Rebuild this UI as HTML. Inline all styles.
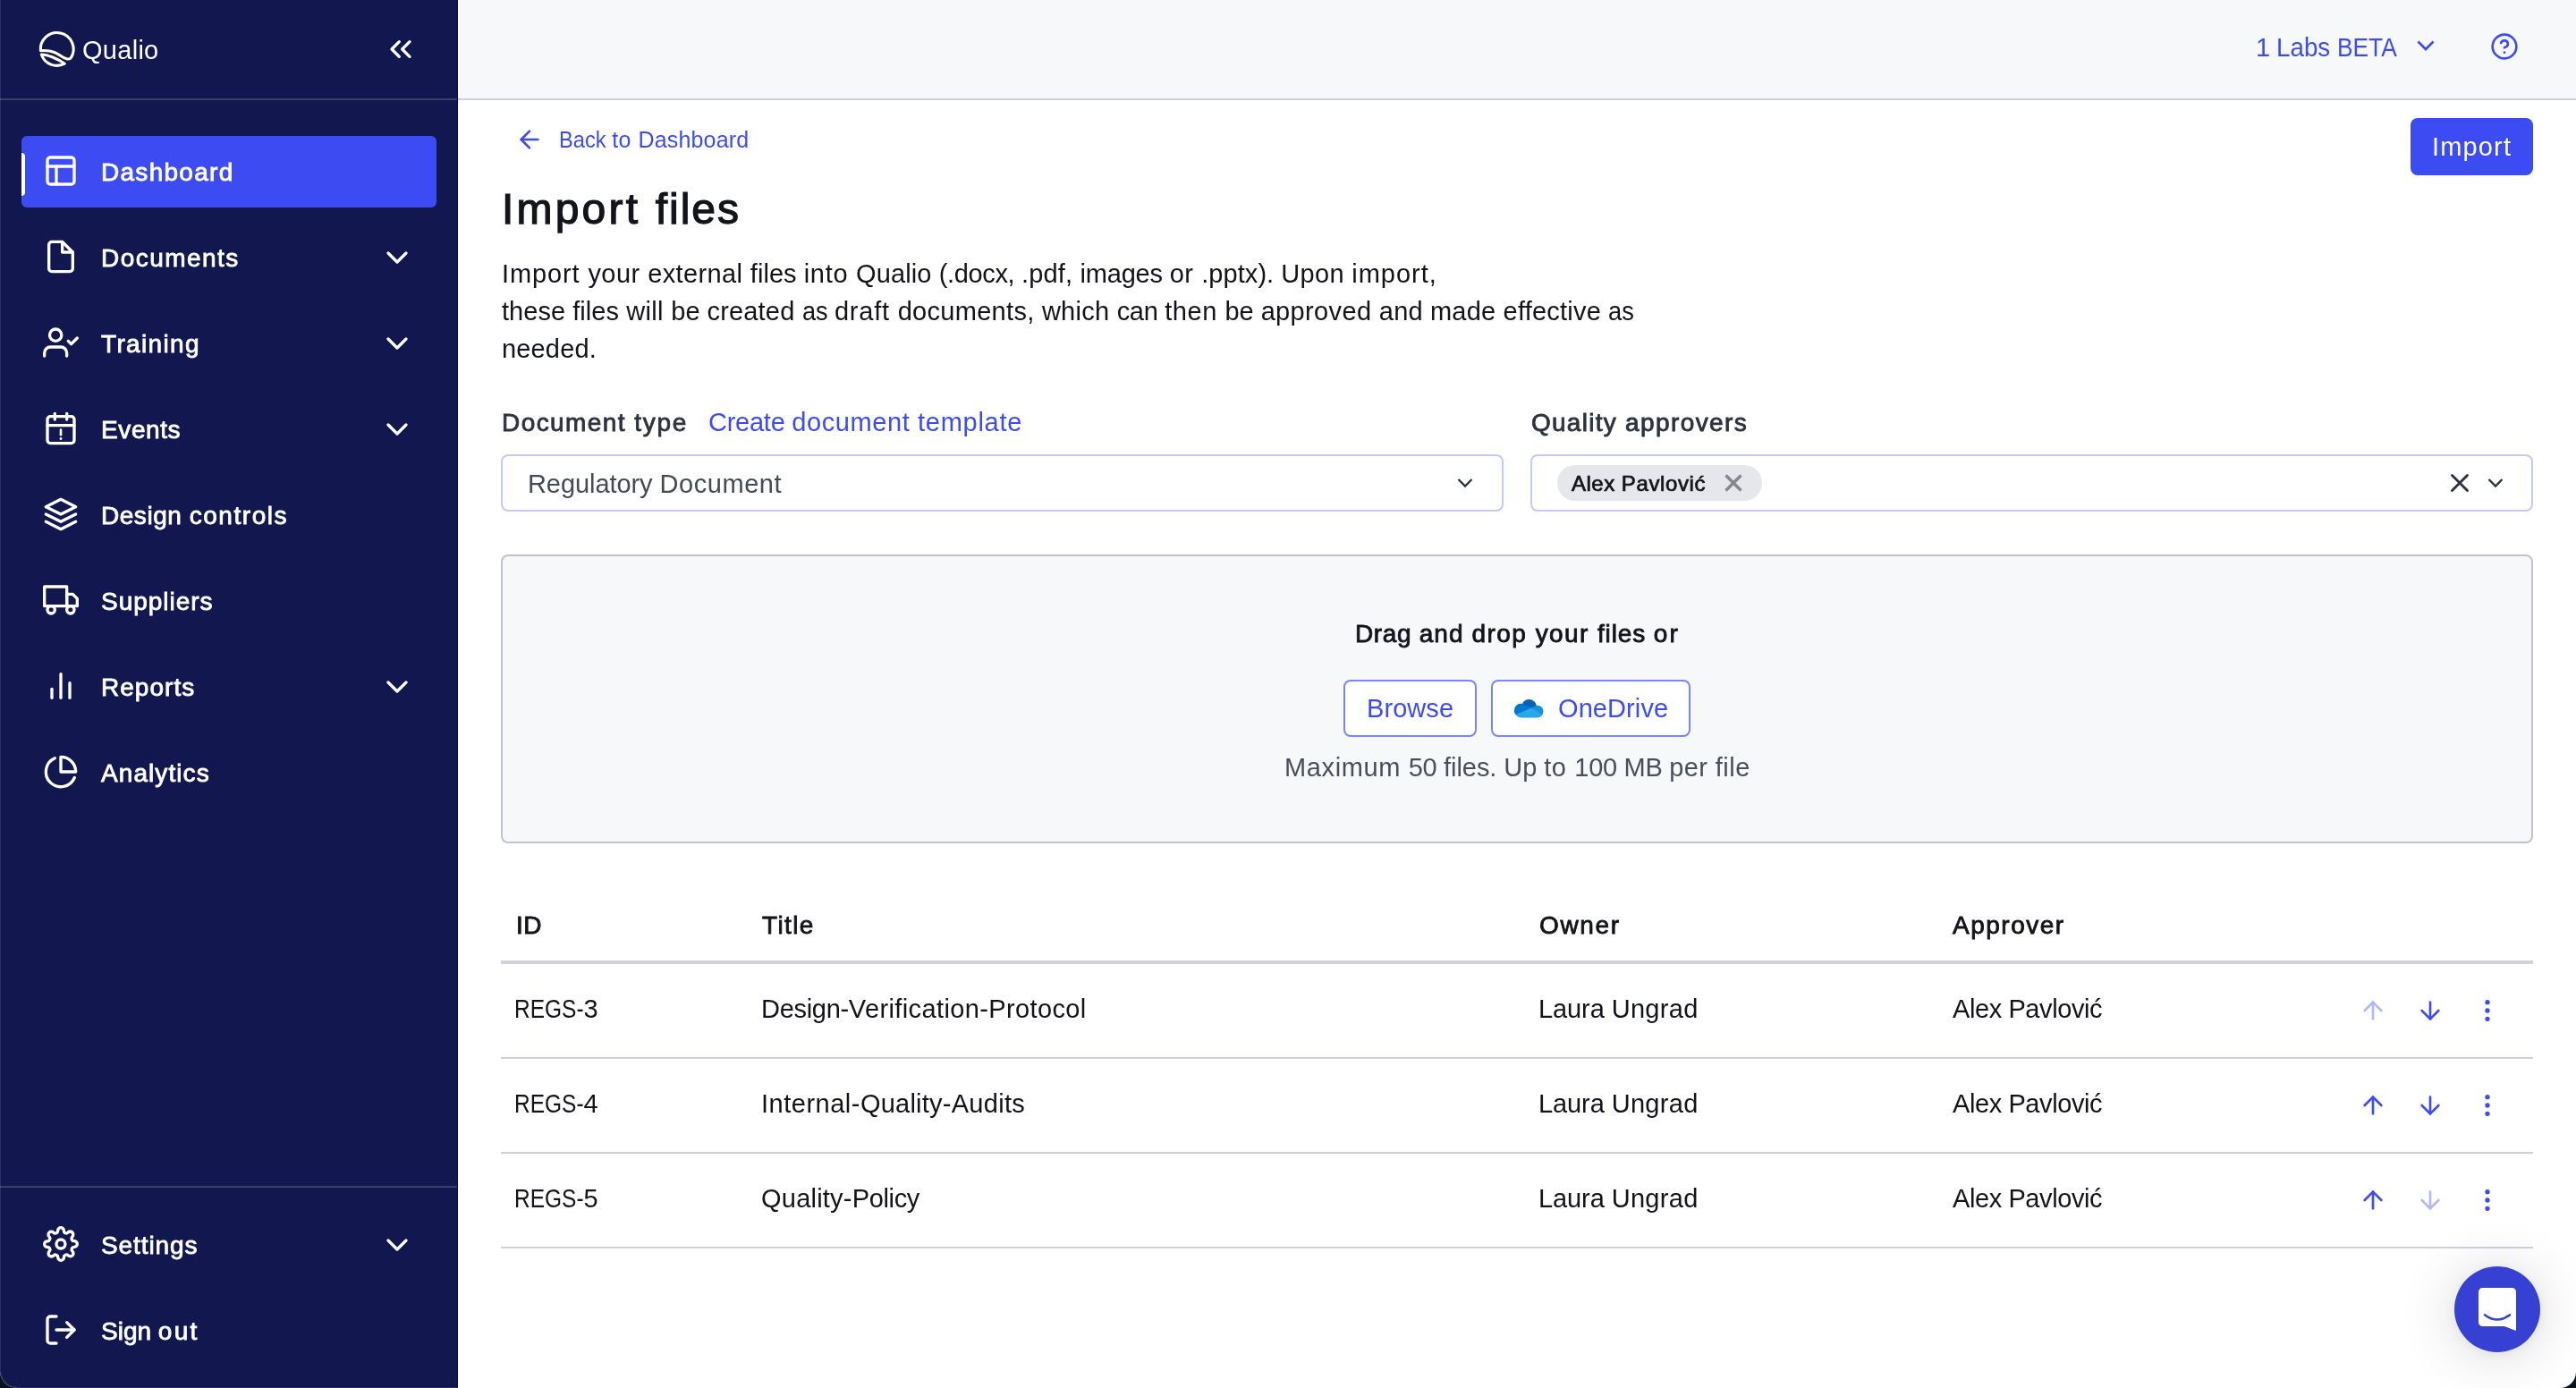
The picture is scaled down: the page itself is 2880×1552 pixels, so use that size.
<!DOCTYPE html>
<html lang="en"><head><meta charset="utf-8"><meta name="viewport" content="width=2880"><title>Import files - Qualio</title>
<style>
html,body{margin:0;padding:0;background:#06141F;}
body{width:2880px;height:1552px;overflow:hidden;position:relative;font-family:"Liberation Sans", sans-serif;}
#app{position:absolute;left:0;top:0;width:2880px;height:1552px;background:#fff;overflow:hidden;border-radius:0 0 18px 19px;}
.b{position:absolute;}
.t{position:absolute;white-space:pre;line-height:1;will-change:transform;font-family:"Liberation Sans", sans-serif;}
.sx{display:inline-block;transform-origin:0 50%;white-space:pre;}
.i{position:absolute;fill:none;stroke-linecap:round;stroke-linejoin:round;overflow:visible;}
</style></head>
<body>
<div id="app">
<div class="b" style="left:0;top:0;width:512px;height:1552px;background:#12174F"></div>
<div class="b" style="left:511px;top:0;width:1px;height:1552px;background:#070C49"></div>
<div class="b" style="left:0;top:110px;width:511px;height:2px;background:#3A3E6C"></div>
<div class="b" style="left:0;top:1326px;width:511px;height:2px;background:#3A3E6C"></div>
<svg class="i" style="left:44px;top:35px" width="40" height="40" viewBox="0 0 40 40" stroke="#fff" stroke-width="3.1"><path d="M1.4 21.6A18.4 18.4 0 1 1 35.6 29.2C34.6 31 32.5 31.2 30.5 30.8C26 29.8 23 26.5 19.2 24.6C14 22 8 21.2 1.4 21.6Z"/><path d="M2.3 26C8 25.5 20 30.5 28.3 36.2A18.4 18.4 0 0 1 2.3 26Z"/></svg>
<svg class="i" style="left:428.0px;top:35.0px" width="40" height="40" viewBox="0 0 24 24" stroke="#fff" stroke-width="2" ><polyline points="11 17 6 12 11 7"/><polyline points="18 17 13 12 18 7"/></svg>
<div class="b" style="left:24px;top:152px;width:464px;height:80px;background:#3D4CF2;border-radius:6px"></div>
<div class="b" style="left:24px;top:171px;width:4px;height:48px;background:#fff;border-radius:0 4px 4px 0"></div>
<svg class="i" style="left:48.0px;top:171.0px" width="40" height="40" viewBox="0 0 24 24" stroke="#fff" stroke-width="2" ><rect x="3" y="3" width="18" height="18" rx="2" ry="2"/><line x1="3" y1="9" x2="21" y2="9"/><line x1="9" y1="21" x2="9" y2="9"/></svg>
<svg class="i" style="left:48.0px;top:267.0px" width="40" height="40" viewBox="0 0 24 24" stroke="#fff" stroke-width="2" ><path d="M13 2H6a2 2 0 0 0-2 2v16a2 2 0 0 0 2 2h12a2 2 0 0 0 2-2V9z"/><polyline points="13 2 13 9 20 9"/></svg>
<svg class="i" style="left:424.0px;top:268.0px" width="40" height="40" viewBox="0 0 24 24" stroke="#fff" stroke-width="2" ><polyline points="6 9 12 15 18 9"/></svg>
<svg class="i" style="left:48.0px;top:363.0px" width="40" height="40" viewBox="0 0 24 24" stroke="#fff" stroke-width="2" ><path d="M16 21v-2a4 4 0 0 0-4-4H5a4 4 0 0 0-4 4v2"/><circle cx="8.5" cy="7" r="4"/><polyline points="17 11 19 13 23 9"/></svg>
<svg class="i" style="left:424.0px;top:364.0px" width="40" height="40" viewBox="0 0 24 24" stroke="#fff" stroke-width="2" ><polyline points="6 9 12 15 18 9"/></svg>
<svg class="i" style="left:48.0px;top:459.0px" width="40" height="40" viewBox="0 0 24 24" stroke="#fff" stroke-width="2" ><rect x="3" y="4" width="18" height="18" rx="2" ry="2"/><line x1="16" y1="2" x2="16" y2="6"/><line x1="8" y1="2" x2="8" y2="6"/><line x1="3" y1="10" x2="21" y2="10"/><line x1="12" y1="13" x2="12" y2="16.3" stroke-width="1.6"/><line x1="12" y1="18.9" x2="12" y2="19" stroke-width="1.7"/></svg>
<svg class="i" style="left:424.0px;top:460.0px" width="40" height="40" viewBox="0 0 24 24" stroke="#fff" stroke-width="2" ><polyline points="6 9 12 15 18 9"/></svg>
<svg class="i" style="left:48.0px;top:555.0px" width="40" height="40" viewBox="0 0 24 24" stroke="#fff" stroke-width="2" ><polygon points="12 2 2 7 12 12 22 7 12 2"/><polyline points="2 17 12 22 22 17"/><polyline points="2 12 12 17 22 12"/></svg>
<svg class="i" style="left:48.0px;top:651.0px" width="40" height="40" viewBox="0 0 24 24" stroke="#fff" stroke-width="2" ><rect x="1" y="3" width="15" height="13"/><polygon points="16 8 20 8 23 11 23 16 16 16 16 8"/><circle cx="5.5" cy="18.5" r="2.5"/><circle cx="18.5" cy="18.5" r="2.5"/></svg>
<svg class="i" style="left:48.0px;top:747.0px" width="40" height="40" viewBox="0 0 24 24" stroke="#fff" stroke-width="2" ><line x1="18" y1="20" x2="18" y2="10"/><line x1="12" y1="20" x2="12" y2="4"/><line x1="6" y1="20" x2="6" y2="14"/></svg>
<svg class="i" style="left:424.0px;top:748.0px" width="40" height="40" viewBox="0 0 24 24" stroke="#fff" stroke-width="2" ><polyline points="6 9 12 15 18 9"/></svg>
<svg class="i" style="left:48.0px;top:843.0px" width="40" height="40" viewBox="0 0 24 24" stroke="#fff" stroke-width="2" ><path d="M21.21 15.89A10 10 0 1 1 8 2.83"/><path d="M22 12A10 10 0 0 0 12 2v10z"/></svg>
<svg class="i" style="left:48.0px;top:1371.0px" width="40" height="40" viewBox="0 0 24 24" stroke="#fff" stroke-width="2" ><circle cx="12" cy="12" r="3"/><path d="M19.4 15a1.65 1.65 0 0 0 .33 1.82l.06.06a2 2 0 0 1 0 2.83 2 2 0 0 1-2.83 0l-.06-.06a1.65 1.65 0 0 0-1.82-.33 1.65 1.65 0 0 0-1 1.51V21a2 2 0 0 1-2 2 2 2 0 0 1-2-2v-.09A1.65 1.65 0 0 0 9 19.4a1.65 1.65 0 0 0-1.82.33l-.06.06a2 2 0 0 1-2.83 0 2 2 0 0 1 0-2.83l.06-.06a1.65 1.65 0 0 0 .33-1.82 1.65 1.65 0 0 0-1.51-1H3a2 2 0 0 1-2-2 2 2 0 0 1 2-2h.09A1.65 1.65 0 0 0 4.6 9a1.65 1.65 0 0 0-.33-1.82l-.06-.06a2 2 0 0 1 0-2.83 2 2 0 0 1 2.83 0l.06.06a1.65 1.65 0 0 0 1.82.33H9a1.65 1.65 0 0 0 1-1.51V3a2 2 0 0 1 2-2 2 2 0 0 1 2 2v.09a1.65 1.65 0 0 0 1 1.51 1.65 1.65 0 0 0 1.82-.33l.06-.06a2 2 0 0 1 2.83 0 2 2 0 0 1 0 2.83l-.06.06a1.65 1.65 0 0 0-.33 1.82V9a1.65 1.65 0 0 0 1.51 1H21a2 2 0 0 1 2 2 2 2 0 0 1-2 2h-.09a1.65 1.65 0 0 0-1.51 1z"/></svg>
<svg class="i" style="left:424.0px;top:1372.0px" width="40" height="40" viewBox="0 0 24 24" stroke="#fff" stroke-width="2" ><polyline points="6 9 12 15 18 9"/></svg>
<svg class="i" style="left:48.0px;top:1467.0px" width="40" height="40" viewBox="0 0 24 24" stroke="#fff" stroke-width="2" ><path d="M9 21H5a2 2 0 0 1-2-2V5a2 2 0 0 1 2-2h4"/><polyline points="16 17 21 12 16 7"/><line x1="21" y1="12" x2="9" y2="12"/></svg>
<div class="b" style="left:512px;top:0;width:2368px;height:110px;background:#fff"></div>
<div class="b" style="left:513px;top:0;width:2367px;height:110px;background:#F7F8FA"></div>
<div class="b" style="left:512px;top:110px;width:2368px;height:2px;background:#D0D1DB"></div>
<svg class="i" style="left:2696.0px;top:35.2px;stroke-linecap:butt;stroke-linejoin:miter" width="32" height="32" viewBox="0 0 24 24" stroke="#3D4CF2" stroke-width="2" ><polyline points="5.6 8.6 12 15 18.4 8.6"/></svg>
<svg class="i" style="left:2784.0px;top:36.0px" width="32" height="32" viewBox="0 0 24 24" stroke="#3D4CF2" stroke-width="2" ><circle cx="12" cy="12" r="10"/><path d="M9.09 9a3 3 0 0 1 5.83 1c0 2-3 3-3 3"/><line x1="12" y1="17" x2="12.01" y2="17"/></svg>
<svg class="i" style="left:576.0px;top:140.0px" width="32" height="32" viewBox="0 0 24 24" stroke="#3D4CF2" stroke-width="2" ><line x1="19" y1="12" x2="5" y2="12"/><polyline points="12 19 5 12 12 5"/></svg>
<div class="b" style="left:2695px;top:132px;width:137px;height:64px;background:#3D4CF2;border-radius:8px"></div>
<div class="b" style="left:560px;top:508px;width:1121px;height:64px;background:#fff;border:2px solid #C4C9FC;border-radius:8px;box-sizing:border-box"></div>
<div class="b" style="left:1711px;top:508px;width:1121px;height:64px;background:#fff;border:2px solid #C4C9FC;border-radius:8px;box-sizing:border-box"></div>
<svg class="i" style="left:1624.0px;top:525.8px;stroke-linecap:butt;stroke-linejoin:miter" width="28" height="28" viewBox="0 0 24 24" stroke="#2E3140" stroke-width="2" ><polyline points="5.6 8.6 12 15 18.4 8.6"/></svg>
<div class="b" style="left:1741px;top:520px;width:229px;height:40px;background:#E5E7EB;border-radius:20px"></div>
<svg class="i" style="left:1921.0px;top:523.0px;stroke-linecap:butt;stroke-linejoin:miter" width="34" height="34" viewBox="0 0 24 24" stroke="#85878C" stroke-width="2.4" ><line x1="18" y1="6" x2="6" y2="18"/><line x1="6" y1="6" x2="18" y2="18"/></svg>
<svg class="i" style="left:2733.0px;top:523.0px" width="34" height="34" viewBox="0 0 24 24" stroke="#2E3140" stroke-width="2.0" ><line x1="18" y1="6" x2="6" y2="18"/><line x1="6" y1="6" x2="18" y2="18"/></svg>
<svg class="i" style="left:2776.0px;top:525.8px;stroke-linecap:butt;stroke-linejoin:miter" width="28" height="28" viewBox="0 0 24 24" stroke="#2E3140" stroke-width="2" ><polyline points="5.6 8.6 12 15 18.4 8.6"/></svg>
<div class="b" style="left:560px;top:620px;width:2272px;height:323px;background:#F7F8FA;border:2px solid #C0C2CE;border-radius:8px;box-sizing:border-box"></div>
<div class="b" style="left:1502px;top:760px;width:149px;height:64px;background:#fff;border:2px solid #7A85FD;border-radius:8px;box-sizing:border-box"></div>
<div class="b" style="left:1667px;top:760px;width:223px;height:64px;background:#fff;border:2px solid #7A85FD;border-radius:8px;box-sizing:border-box"></div>
<svg class="i" style="left:1693px;top:782px" width="32.4" height="20.3" viewBox="0 0 32.4 20.3" stroke="none"><defs><clipPath id="cl"><circle cx="7.6" cy="12.4" r="7.6"/><circle cx="16.6" cy="8.4" r="8.4"/><circle cx="25.6" cy="13.6" r="6.7"/><rect x="7" y="12" width="19" height="8.3"/></clipPath></defs><g clip-path="url(#cl)"><rect width="33" height="21" fill="#0364B8"/><polygon points="-2,-2 8.2,4.7 19.4,9.3 2.1,16.8 -2,22" fill="#0078D4"/><polygon points="19.4,9.3 27,5.9 40,4 40,22 31.5,16.8" fill="#1490DF"/><polygon points="19.4,9.3 34,18.3 34,24 -2,24 -2,18.6" fill="#28A8EA"/></g></svg>
<div class="b" style="left:560px;top:1074px;width:2272px;height:4px;background:#D0D1DB"></div>
<div class="b" style="left:560px;top:1182px;width:2272px;height:2px;background:#D0D1DB"></div>
<svg class="i" style="left:2637.0px;top:1114.0px" width="32" height="32" viewBox="0 0 24 24" stroke="#B1B7FA" stroke-width="2" ><line x1="12" y1="19" x2="12" y2="5"/><polyline points="5 12 12 5 19 12"/></svg>
<svg class="i" style="left:2701.0px;top:1114.0px" width="32" height="32" viewBox="0 0 24 24" stroke="#3D4CF2" stroke-width="2" ><line x1="12" y1="5" x2="12" y2="19"/><polyline points="19 12 12 19 5 12"/></svg>
<svg class="i" style="left:2765.0px;top:1114.0px" width="32" height="32" viewBox="0 0 24 24" stroke="#3D4CF2" stroke-width="2" ><circle cx="12" cy="12" r="1"/><circle cx="12" cy="5" r="1"/><circle cx="12" cy="19" r="1"/></svg>
<div class="b" style="left:560px;top:1288px;width:2272px;height:2px;background:#D0D1DB"></div>
<svg class="i" style="left:2637.0px;top:1220.0px" width="32" height="32" viewBox="0 0 24 24" stroke="#3D4CF2" stroke-width="2" ><line x1="12" y1="19" x2="12" y2="5"/><polyline points="5 12 12 5 19 12"/></svg>
<svg class="i" style="left:2701.0px;top:1220.0px" width="32" height="32" viewBox="0 0 24 24" stroke="#3D4CF2" stroke-width="2" ><line x1="12" y1="5" x2="12" y2="19"/><polyline points="19 12 12 19 5 12"/></svg>
<svg class="i" style="left:2765.0px;top:1220.0px" width="32" height="32" viewBox="0 0 24 24" stroke="#3D4CF2" stroke-width="2" ><circle cx="12" cy="12" r="1"/><circle cx="12" cy="5" r="1"/><circle cx="12" cy="19" r="1"/></svg>
<div class="b" style="left:560px;top:1394px;width:2272px;height:2px;background:#D0D1DB"></div>
<svg class="i" style="left:2637.0px;top:1326.0px" width="32" height="32" viewBox="0 0 24 24" stroke="#3D4CF2" stroke-width="2" ><line x1="12" y1="19" x2="12" y2="5"/><polyline points="5 12 12 5 19 12"/></svg>
<svg class="i" style="left:2701.0px;top:1326.0px" width="32" height="32" viewBox="0 0 24 24" stroke="#B1B7FA" stroke-width="2" ><line x1="12" y1="5" x2="12" y2="19"/><polyline points="19 12 12 19 5 12"/></svg>
<svg class="i" style="left:2765.0px;top:1326.0px" width="32" height="32" viewBox="0 0 24 24" stroke="#3D4CF2" stroke-width="2" ><circle cx="12" cy="12" r="1"/><circle cx="12" cy="5" r="1"/><circle cx="12" cy="19" r="1"/></svg>
<div class="b" style="left:2744px;top:1416px;width:96px;height:96px;border-radius:50%;background:#3640D3;box-shadow:0 2px 12px rgba(0,0,0,.06),0 4px 64px rgba(0,0,0,.16)"></div>
<svg class="i" style="left:2768px;top:1438px" width="48" height="52" viewBox="0 0 48 52" stroke="none"><path d="M7.5 2H40.5A4.5 4.5 0 0 1 45 6.5V50L32 45H7.5A4.5 4.5 0 0 1 3 40.5V6.5A4.5 4.5 0 0 1 7.5 2Z" fill="#fff"/><path d="M10 32.2Q24 42.8 38 32.2" fill="none" stroke="#3640D3" stroke-width="2.5" stroke-linecap="round"/></svg>
<div class="t" style="left:92px;top:42px;font-size:29px;color:#fff;letter-spacing:0.28px;">Qualio</div>
<div class="t" style="left:112.5px;top:179px;font-size:28px;color:#fff;-webkit-text-stroke:0.84px #fff;letter-spacing:1.28px;">Dashboard</div>
<div class="t" style="left:112.5px;top:275px;font-size:28px;color:#fff;-webkit-text-stroke:0.84px #fff;letter-spacing:1.45px;">Documents</div>
<div class="t" style="left:112.5px;top:371px;font-size:28px;color:#fff;-webkit-text-stroke:0.84px #fff;letter-spacing:1.34px;">Training</div>
<div class="t" style="left:112.5px;top:467px;font-size:28px;color:#fff;-webkit-text-stroke:0.84px #fff;letter-spacing:0.6px;">Events</div>
<div class="t" style="left:112.5px;top:563px;font-size:28px;color:#fff;-webkit-text-stroke:0.84px #fff;"><span style="letter-spacing:0.53px">Design </span><span style="letter-spacing:1.55px">controls</span></div>
<div class="t" style="left:112.5px;top:659px;font-size:28px;color:#fff;-webkit-text-stroke:0.84px #fff;letter-spacing:0.98px;">Suppliers</div>
<div class="t" style="left:112.5px;top:755px;font-size:28px;color:#fff;-webkit-text-stroke:0.84px #fff;letter-spacing:1.04px;">Reports</div>
<div class="t" style="left:112.5px;top:851px;font-size:28px;color:#fff;-webkit-text-stroke:0.84px #fff;letter-spacing:1.08px;">Analytics</div>
<div class="t" style="left:112.5px;top:1379px;font-size:28px;color:#fff;-webkit-text-stroke:0.84px #fff;letter-spacing:0.91px;">Settings</div>
<div class="t" style="left:112.5px;top:1475px;font-size:28px;color:#fff;-webkit-text-stroke:0.84px #fff;"><span style="letter-spacing:-0.01px">Sign </span><span style="letter-spacing:2.34px">out</span></div>
<div class="t" style="left:2521.5px;top:39px;font-size:29px;color:#3D4CF2;"><span style="letter-spacing:-0.45px">1 </span><span class="sx" style="width:67.92px;transform:scaleX(0.9573)">Labs </span><span class="sx" style="width:66.78px;transform:scaleX(0.9074)">BETA</span></div>
<div class="t" style="left:624.5px;top:144px;font-size:25px;color:#3D4CF2;"><span class="sx" style="width:59.19px;transform:scaleX(0.9465)">Back </span><span style="letter-spacing:0.48px">to </span><span style="letter-spacing:0.17px">Dashboard</span></div>
<div class="t" style="left:2719px;top:150px;font-size:29px;color:#fff;letter-spacing:1.16px;">Import</div>
<div class="t" style="left:561px;top:210px;font-size:48px;color:#13141B;-webkit-text-stroke:1.25px #13141B;"><span style="letter-spacing:3.2px">Import </span><span style="letter-spacing:1.96px">files</span></div>
<div class="t" style="left:560.5px;top:292px;font-size:29px;color:#13141B;"><span style="letter-spacing:0.88px">Import </span><span style="letter-spacing:0.46px">your </span><span style="letter-spacing:0.38px">external </span><span style="letter-spacing:0.04px">files </span><span style="letter-spacing:0.7px">into </span><span style="letter-spacing:0.12px">Qualio </span><span style="letter-spacing:-0.36px">(.docx, </span><span style="letter-spacing:0.18px">.pdf, </span><span style="letter-spacing:-0.21px">images </span><span style="letter-spacing:0.57px">or </span><span style="letter-spacing:0.06px">.pptx). </span><span style="letter-spacing:0.29px">Upon </span><span style="letter-spacing:1.0px">import,</span></div>
<div class="t" style="left:560.5px;top:334px;font-size:29px;color:#13141B;"><span style="letter-spacing:0.04px">these </span><span style="letter-spacing:0.04px">files </span><span style="letter-spacing:0.37px">will </span><span style="letter-spacing:-0.06px">be </span><span style="letter-spacing:0.18px">created </span><span class="sx" style="width:36.19px;transform:scaleX(0.9354)">as </span><span style="letter-spacing:0.79px">draft </span><span style="letter-spacing:0.29px">documents, </span><span style="letter-spacing:0.27px">which </span><span style="letter-spacing:-0.35px">can </span><span style="letter-spacing:0.57px">then </span><span style="letter-spacing:-0.06px">be </span><span style="letter-spacing:0.36px">approved </span><span style="letter-spacing:0.17px">and </span><span style="letter-spacing:0.2px">made </span><span style="letter-spacing:0.22px">effective </span><span class="sx" style="width:28.91px;transform:scaleX(0.9434)">as</span></div>
<div class="t" style="left:560.5px;top:376px;font-size:29px;color:#13141B;letter-spacing:0.16px;">needed.</div>
<div class="t" style="left:560.5px;top:459px;font-size:28px;color:#2E3140;-webkit-text-stroke:0.84px #2E3140;"><span style="letter-spacing:1.43px">Document </span><span style="letter-spacing:1.67px">type</span></div>
<div class="t" style="left:792px;top:458px;font-size:29px;color:#3D4CF2;"><span style="letter-spacing:-0.25px">Create </span><span style="letter-spacing:0.58px">document </span><span style="letter-spacing:0.73px">template</span></div>
<div class="t" style="left:1711.5px;top:459px;font-size:28px;color:#2E3140;-webkit-text-stroke:0.84px #2E3140;"><span style="letter-spacing:1.26px">Quality </span><span style="letter-spacing:1.4px">approvers</span></div>
<div class="t" style="left:590px;top:527px;font-size:29px;color:#464A58;"><span style="letter-spacing:-0.07px">Regulatory </span><span style="letter-spacing:0.55px">Document</span></div>
<div class="t" style="left:1757px;top:529px;font-size:24px;color:#13141B;-webkit-text-stroke:0.72px #13141B;"><span style="letter-spacing:0.5px">Alex </span><span style="letter-spacing:0.61px">Pavlović</span></div>
<div class="t" style="left:1515px;top:695px;font-size:28px;color:#13141B;-webkit-text-stroke:0.84px #13141B;"><span style="letter-spacing:0.63px">Drag </span><span style="letter-spacing:1.06px">and </span><span style="letter-spacing:1.5px">drop </span><span style="letter-spacing:1.4px">your </span><span style="letter-spacing:0.87px">files </span><span style="letter-spacing:2.14px">or</span></div>
<div class="t" style="left:1528px;top:778px;font-size:29px;color:#3D4CF2;letter-spacing:0.07px;">Browse</div>
<div class="t" style="left:1741.5px;top:778px;font-size:29px;color:#3D4CF2;letter-spacing:0.09px;">OneDrive</div>
<div class="t" style="left:1436px;top:844px;font-size:29px;color:#4A4E5C;"><span style="letter-spacing:0.63px">Maximum </span><span style="letter-spacing:-0.34px">50 </span><span style="letter-spacing:-0.06px">files. </span><span style="letter-spacing:-0.1px">Up </span><span style="letter-spacing:0.62px">to </span><span style="letter-spacing:-0.29px">100 </span><span style="letter-spacing:-0.34px">MB </span><span style="letter-spacing:0.4px">per </span><span style="letter-spacing:0.55px">file</span></div>
<div class="t" style="left:576.5px;top:1021px;font-size:28px;color:#13141B;-webkit-text-stroke:0.84px #13141B;letter-spacing:0.54px;">ID</div>
<div class="t" style="left:852px;top:1021px;font-size:28px;color:#13141B;-webkit-text-stroke:0.84px #13141B;letter-spacing:1.36px;">Title</div>
<div class="t" style="left:1721px;top:1021px;font-size:28px;color:#13141B;-webkit-text-stroke:0.84px #13141B;letter-spacing:1.68px;">Owner</div>
<div class="t" style="left:2183px;top:1021px;font-size:28px;color:#13141B;-webkit-text-stroke:0.84px #13141B;letter-spacing:1.51px;">Approver</div>
<div class="t" style="left:575px;top:1114px;font-size:29px;color:#13141B;"><span class="sx" style="width:77.56px;transform:scaleX(0.8445)">REGS-</span><span style="letter-spacing:-0.12px">3</span></div>
<div class="t" style="left:851px;top:1114px;font-size:29px;color:#13141B;"><span style="letter-spacing:-0.3px">Design-</span><span style="letter-spacing:0.38px">Verification-</span><span style="letter-spacing:0.36px">Protocol</span></div>
<div class="t" style="left:1720px;top:1114px;font-size:29px;color:#13141B;"><span style="letter-spacing:-0.1px">Laura </span><span style="letter-spacing:0.3px">Ungrad</span></div>
<div class="t" style="left:2183px;top:1114px;font-size:29px;color:#13141B;"><span style="letter-spacing:-0.41px">Alex </span><span style="letter-spacing:-0.4px">Pavlović</span></div>
<div class="t" style="left:575px;top:1220px;font-size:29px;color:#13141B;"><span class="sx" style="width:77.56px;transform:scaleX(0.8445)">REGS-</span><span style="letter-spacing:-0.12px">4</span></div>
<div class="t" style="left:851px;top:1220px;font-size:29px;color:#13141B;"><span style="letter-spacing:0.51px">Internal-</span><span style="letter-spacing:0.22px">Quality-</span><span style="letter-spacing:0.3px">Audits</span></div>
<div class="t" style="left:1720px;top:1220px;font-size:29px;color:#13141B;"><span style="letter-spacing:-0.1px">Laura </span><span style="letter-spacing:0.3px">Ungrad</span></div>
<div class="t" style="left:2183px;top:1220px;font-size:29px;color:#13141B;"><span style="letter-spacing:-0.41px">Alex </span><span style="letter-spacing:-0.4px">Pavlović</span></div>
<div class="t" style="left:575px;top:1326px;font-size:29px;color:#13141B;"><span class="sx" style="width:77.56px;transform:scaleX(0.8445)">REGS-</span><span style="letter-spacing:-0.12px">5</span></div>
<div class="t" style="left:851px;top:1326px;font-size:29px;color:#13141B;"><span style="letter-spacing:0.22px">Quality-</span><span style="letter-spacing:-0.35px">Policy</span></div>
<div class="t" style="left:1720px;top:1326px;font-size:29px;color:#13141B;"><span style="letter-spacing:-0.1px">Laura </span><span style="letter-spacing:0.3px">Ungrad</span></div>
<div class="t" style="left:2183px;top:1326px;font-size:29px;color:#13141B;"><span style="letter-spacing:-0.41px">Alex </span><span style="letter-spacing:-0.4px">Pavlović</span></div>
<div class="b" style="left:0;top:0;width:2880px;height:1552px;border-radius:0 0 18px 19px;box-shadow:inset 1px -1px 0 rgba(255,255,255,.10)"></div>
</div>
</body></html>
